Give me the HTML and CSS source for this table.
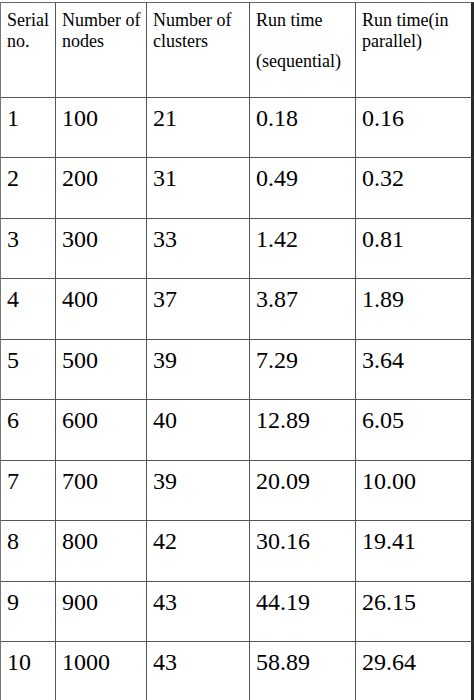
FILE: index.html
```html
<!DOCTYPE html>
<html>
<head>
<meta charset="utf-8">
<link rel="stylesheet" href="styles.css">
</head>
<body>
<div class="wrap">
<table class="grid">
<thead>
<tr class="head">
<th class="c1">Serial no.</th>
<th class="c2">Number of nodes</th>
<th class="c3">Number of clusters</th>
<th class="c4">Run time<br><br>(sequential)</th>
<th class="c5">Run time(in<br>parallel)</th>
</tr>
</thead>
<tbody>
<tr class="r-odd"><td>1</td><td>100</td><td>21</td><td>0.18</td><td>0.16</td></tr>
<tr class="r-even"><td>2</td><td>200</td><td>31</td><td>0.49</td><td>0.32</td></tr>
<tr class="r-odd"><td>3</td><td>300</td><td>33</td><td>1.42</td><td>0.81</td></tr>
<tr class="r-even"><td>4</td><td>400</td><td>37</td><td>3.87</td><td>1.89</td></tr>
<tr class="r-odd"><td>5</td><td>500</td><td>39</td><td>7.29</td><td>3.64</td></tr>
<tr class="r-even"><td>6</td><td>600</td><td>40</td><td>12.89</td><td>6.05</td></tr>
<tr class="r-odd"><td>7</td><td>700</td><td>39</td><td>20.09</td><td>10.00</td></tr>
<tr class="r-even"><td>8</td><td>800</td><td>42</td><td>30.16</td><td>19.41</td></tr>
<tr class="r-odd"><td>9</td><td>900</td><td>43</td><td>44.19</td><td>26.15</td></tr>
<tr class="r-even"><td>10</td><td>1000</td><td>43</td><td>58.89</td><td>29.64</td></tr>
</tbody>
</table>
</div>
</body>
</html>
```
FILE: styles.css
```css
html, body {
  margin: 0;
  padding: 0;
  background: #fff;
}
.wrap {
  padding-top: 2px;
  width: 474px;
  height: 698px;
  overflow: hidden;
}
.grid {
  width: 474px;
  table-layout: fixed;
  border-collapse: separate;
  border-spacing: 0;
  font-family: "Liberation Serif", "Times New Roman", serif;
  color: #000;
}
.grid th,
.grid td {
  box-sizing: border-box;
  border-right: 1px solid #555;
  border-bottom: 1px solid #555;
  vertical-align: top;
  text-align: left;
  padding: 0 0 0 6px;
}
.grid th:first-child,
.grid td:first-child {
  border-left: 1px solid #777;
}
.grid th:last-child,
.grid td:last-child {
  border-right: 3px solid #2a2a2a;
}
.head th {
  border-top: 1px solid #666;
  height: 96px;
  font-weight: normal;
  font-size: 18px;
  line-height: 20.7px;
  padding-top: 7px;
}
.grid td {
  font-size: 24px;
  line-height: 28px;
  padding-top: 6px;
}
.r-odd td { height: 60px; }
.r-even td { height: 61px; }
.c1 { width: 56px; }
.c2 { width: 91px; }
.c3 { width: 103px; }
.c4 { width: 106px; }
.c5 { width: 118px; }
```
